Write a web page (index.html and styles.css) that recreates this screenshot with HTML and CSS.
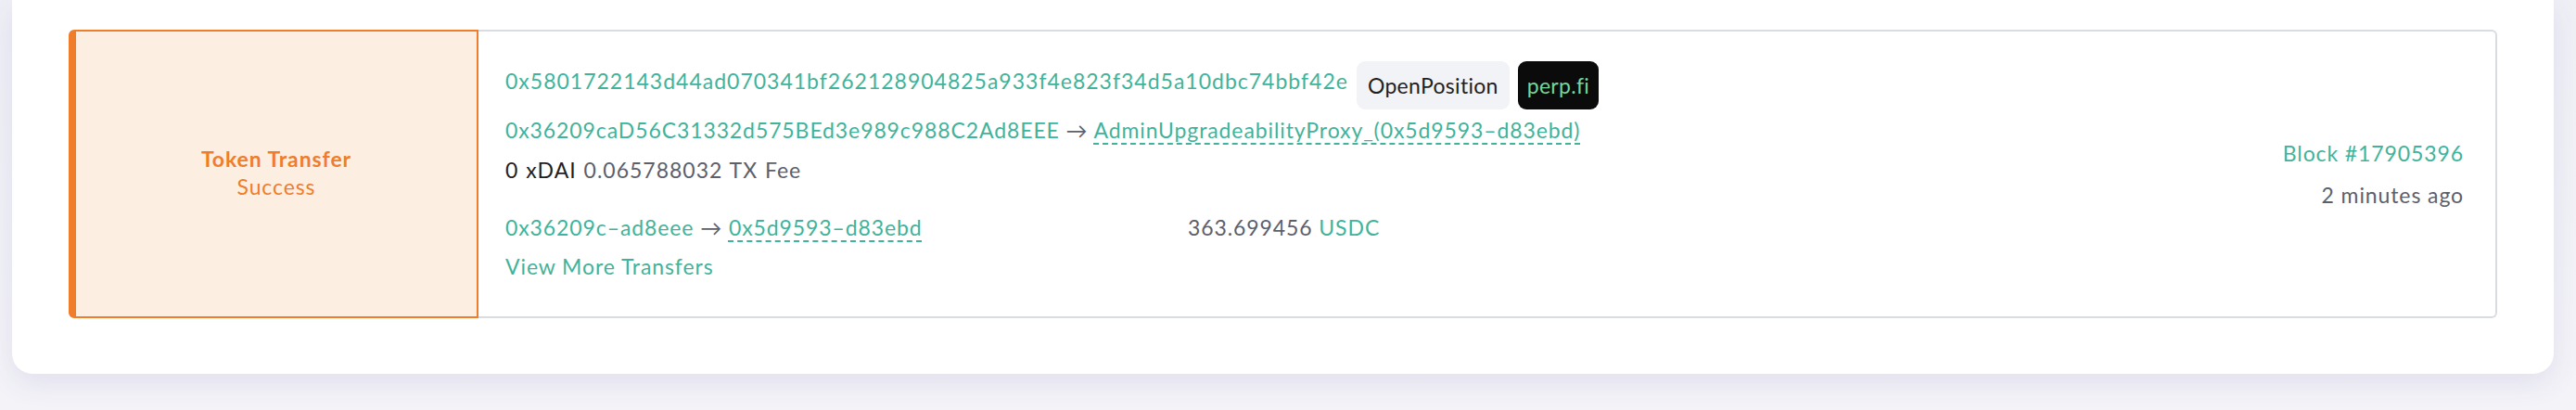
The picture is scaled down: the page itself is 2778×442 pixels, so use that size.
FILE: index.html
```html
<!DOCTYPE html>
<html lang="en">
<head>
<meta charset="utf-8">
<title>Transaction</title>
<link rel="stylesheet" href="styles.css">
</head>
<body>
<main class="card">
  <article class="tile">
    <div class="status">
      <div class="status-type">Token Transfer</div>
      <div class="status-result">Success</div>
    </div>
    <div class="details">
      <div class="content">
        <div class="row-hash">
          <a class="link hash" href="#">0x5801722143d44ad070341bf262128904825a933f4e823f34d5a10dbc74bbf42e</a>
          <span class="badge badge-method">OpenPosition</span>
          <span class="badge badge-app">perp.fi</span>
        </div>
        <div class="row">
          <a class="link" href="#">0x36209caD56C31332d575BEd3e989c988C2Ad8EEE</a>
          <span class="arrow">→</span>
          <a class="link dashed" href="#">AdminUpgradeabilityProxy_(0x5d9593–d83ebd)</a>
        </div>
        <div class="row fee">
          <span class="dark">0 xDAI</span>
          <span class="muted">0.065788032 TX Fee</span>
        </div>
        <div class="transfers">
          <div class="transfer">
            <div class="transfer-parties">
              <a class="link" href="#">0x36209c–ad8eee</a>
              <span class="arrow">→</span>
              <a class="link dashed" href="#">0x5d9593–d83ebd</a>
            </div>
            <div class="transfer-amount">
              <span class="muted">363.699456</span>
              <a class="link" href="#">USDC</a>
            </div>
          </div>
          <a class="link more" href="#">View More Transfers</a>
        </div>
      </div>
      <div class="meta">
        <a class="link" href="#">Block #17905396</a>
        <span class="muted">2 minutes ago</span>
      </div>
    </div>
  </article>
</main>
</body>
</html>
```

FILE: styles.css
```css
* { box-sizing: border-box; }

html, body {
  margin: 0;
  height: 442px;
  overflow: hidden;
}

body {
  background: linear-gradient(180deg, #efeff6 0%, #f3f3f8 100%);
  font-family: Lato, "Liberation Sans", sans-serif;
  font-size: 23px;
  letter-spacing: 0.9px;
  color: #5c606b;
  padding: 0 24px 0 13px;
}

.card {
  background: #ffffff;
  border-radius: 0 0 22px 22px;
  padding: 32px 61px 60px 61px;
  box-shadow: 0 10px 30px rgba(80, 70, 150, 0.10);
}

.tile {
  display: flex;
  height: 311px;
}

.status {
  width: 442px;
  flex: none;
  background: #fcefe2;
  border: 2px solid #ef7d2b;
  border-left-width: 8px;
  border-radius: 6px 0 0 6px;
  display: flex;
  flex-direction: column;
  justify-content: center;
  align-items: center;
  color: #ef7d2b;
  line-height: 30px;
  padding-bottom: 3px;
}

.status-type {
  font-weight: 700;
}

.details {
  flex: 1;
  display: flex;
  justify-content: space-between;
  align-items: center;
  border: 2px solid #d9dce1;
  border-left: none;
  border-radius: 0 6px 6px 0;
  padding: 0 34px 0 29px;
}

.content {
  align-self: flex-start;
  padding-top: 32px;
  line-height: 34px;
}

.link {
  color: #3fb39b;
  text-decoration: none;
}

.dashed {
  text-decoration: underline dashed;
  text-decoration-thickness: 1.5px;
  text-underline-offset: 5px;
}

.arrow {
  color: #5c606b;
}

.dark {
  color: #1f1f22;
}

.muted {
  color: #5c606b;
}

.row-hash {
  display: flex;
  align-items: flex-start;
  gap: 9px;
  height: 52px;
}

.hash {
  margin-top: 4px;
  letter-spacing: 1px;
}

.badge {
  display: inline-flex;
  align-items: center;
  height: 52px;
  padding: 0 12px;
  border-radius: 9px;
  letter-spacing: 0.3px;
}

.badge-method {
  background: #f2f3f7;
  color: #1f1f22;
}

.badge-app {
  background: #0b0b0b;
  color: #74d69b;
  padding: 0 10px;
}

.row {
  margin-top: 5px;
}

.row + .row {
  margin-top: 9px;
}

.fee {
  letter-spacing: 1px;
  word-spacing: 1px;
}

.transfers {
  margin-top: 28px;
  display: flex;
  flex-direction: column;
  gap: 8px;
}

.transfer {
  display: grid;
  grid-template-columns: 736px auto;
}

.more {
  align-self: flex-start;
}

.meta {
  display: flex;
  flex-direction: column;
  align-items: flex-end;
  gap: 11px;
  line-height: 34px;
}
```
